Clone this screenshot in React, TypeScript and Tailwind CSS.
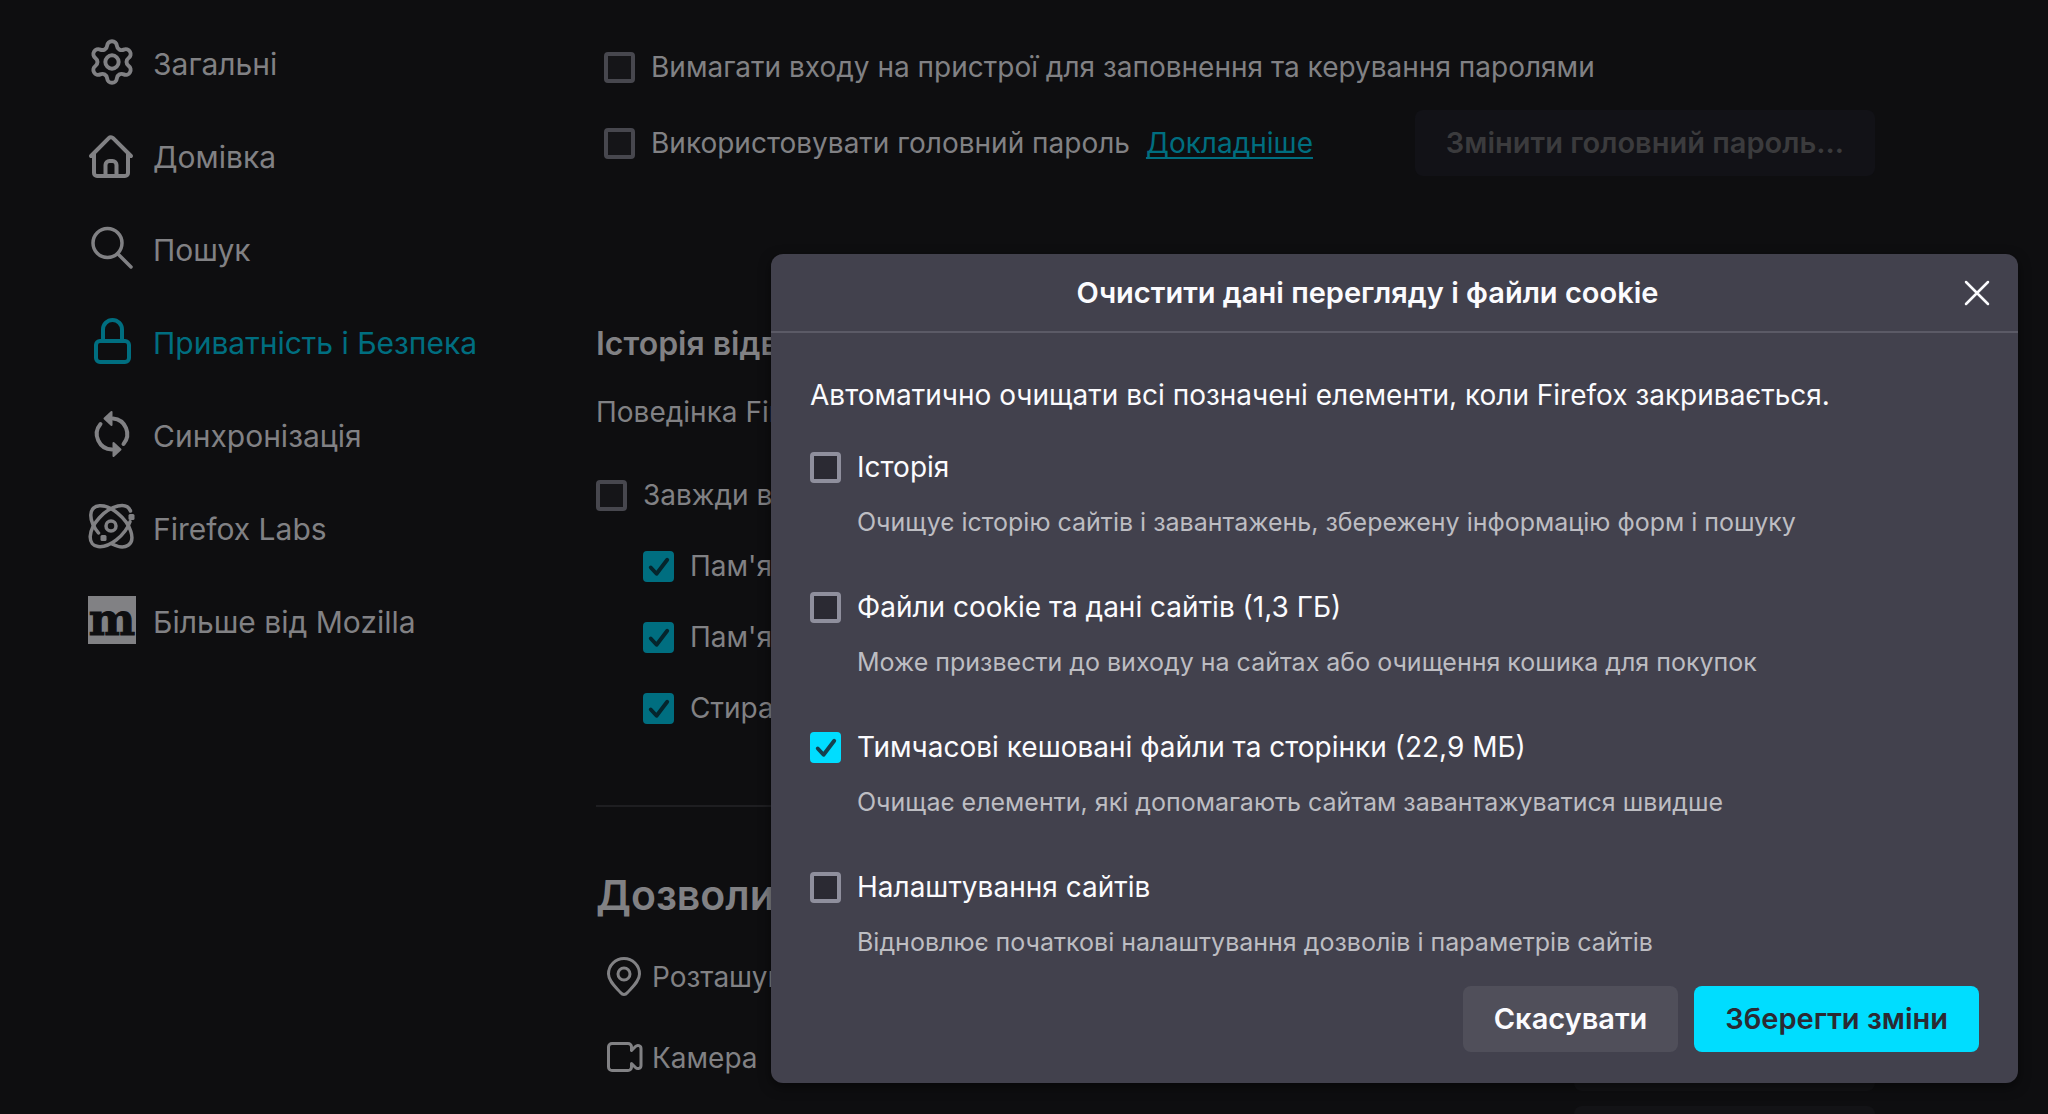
import type { ReactNode } from "react"

const line = { fill: "none", stroke: "currentColor", strokeLinecap: "round", strokeLinejoin: "round" } as const

const icons = {
  gear: (
    <svg viewBox="0 0 24 24" className="size-12" {...line} strokeWidth={1.9}>
      <g transform="translate(12 12) scale(1.04) translate(-12 -12)">
        <path d="M9.671 4.136a2.34 2.34 0 0 1 4.659 0 2.34 2.34 0 0 0 3.319 1.915 2.34 2.34 0 0 1 2.33 4.033 2.34 2.34 0 0 0 0 3.831 2.34 2.34 0 0 1-2.33 4.033 2.34 2.34 0 0 0-3.319 1.915 2.34 2.34 0 0 1-4.659 0 2.34 2.34 0 0 0-3.32-1.915 2.34 2.34 0 0 1-2.33-4.033 2.34 2.34 0 0 0 0-3.831A2.34 2.34 0 0 1 6.35 6.051a2.34 2.34 0 0 0 3.319-1.915" />
        <circle cx="12" cy="12" r="3.2" />
      </g>
    </svg>
  ),
  home: (
    <svg viewBox="0 0 48 48" className="size-12" {...line} strokeWidth={4}>
      <path d="M3 25 20.8 7.2a3 3 0 0 1 4.3 0L43 25" />
      <path d="M6 23v19a3 3 0 0 0 3 3h28a3 3 0 0 0 3-3V23" />
      <path d="M17.5 45V34a4 4 0 0 1 4-4h3a4 4 0 0 1 4 4v11" />
    </svg>
  ),
  search: (
    <svg viewBox="0 0 48 48" className="size-12" {...line} strokeWidth={3.5}>
      <circle cx="19.5" cy="19" r="14.5" />
      <path d="m30 30 13 13" />
    </svg>
  ),
  lock: (
    <svg viewBox="0 0 48 48" className="size-12" {...line} strokeWidth={4}>
      <rect x="8" y="24" width="33" height="21" rx="4" />
      <path d="M15 24V12.5a9.500 9.500 0 0 1 19 0V24" />
    </svg>
  ),
  sync: (
    <svg viewBox="0 0 48 48" className="size-12" {...line} strokeWidth={4}>
      <path d="M12.500 14a15.500 15.500 0 0 0 11.500 25.500" />
      <path d="M25 8.500A15.500 15.500 0 0 1 35.500 34" />
      <path d="M23.500 2v13l-7-6.500z" fill="currentColor" strokeWidth={2} />
      <path d="M25.500 46V33l7 6.500z" fill="currentColor" strokeWidth={2} />
    </svg>
  ),
  labs: (
    <svg viewBox="0 0 48 48" className="size-12" {...line} strokeWidth={3.5}>
      <path d="M42.5 8A25.400 14 -45 1 0 42 18.700" />
      <path d="M10.500 30A25.400 14 45 1 1 24 41" />
      <circle cx="23" cy="23" r="5" />
      <rect x="40.500" y="11" width="6" height="6" rx="1.500" fill="currentColor" stroke="none" />
      <rect x="12.500" y="32" width="6" height="6" rx="1.500" fill="currentColor" stroke="none" />
    </svg>
  ),
  mozilla: (
    <span className="flex size-12 items-center justify-center bg-[#818184] font-['DejaVu_Serif',serif] text-[44px] leading-none font-bold text-[#0e0e10] [-webkit-text-stroke:1px]">
      m
    </span>
  ),
}

const nav = [
  { icon: icons.gear, name: "Загальні" },
  { icon: icons.home, name: "Домівка" },
  { icon: icons.search, name: "Пошук" },
  { icon: icons.lock, name: "Приватність і Безпека", active: true },
  { icon: icons.sync, name: "Синхронізація" },
  { icon: icons.labs, name: "Firefox Labs" },
  { icon: icons.mozilla, name: "Більше від Mozilla" },
]

const options = [
  { name: "Історія", hint: "Очищує історію сайтів і завантажень, збережену інформацію форм і пошуку" },
  { name: "Файли cookie та дані сайтів (1,3 ГБ)", hint: "Може призвести до виходу на сайтах або очищення кошика для покупок" },
  { name: "Тимчасові кешовані файли та сторінки (22,9 МБ)", hint: "Очищає елементи, які допомагають сайтам завантажуватися швидше", checked: true },
  { name: "Налаштування сайтів", hint: "Відновлює початкові налаштування дозволів і параметрів сайтів" },
]

const permissions = [
  {
    name: "Розташування",
    icon: (
      <svg viewBox="0 0 36 40" className="h-10 w-9" {...line} strokeWidth={3}>
        <path d="M18 37.500c-1.500 0-2.500-.8-3.500-2C9 29.500 2.500 24 2.500 17a15.500 15.500 0 0 1 31 0c0 7-6.500 12.500-12 18.500-1 1.200-2 2-3.500 2z" />
        <circle cx="18" cy="17" r="6" />
      </svg>
    ),
  },
  {
    name: "Камера",
    icon: (
      <svg viewBox="0 0 38 40" className="h-10 w-[38px]" {...line} strokeWidth={3}>
        <path d="M25.500 10.500V9a3.500 3.500 0 0 0-3.500-3.500H6A3.500 3.500 0 0 0 2.500 9v20A3.500 3.500 0 0 0 6 32.500h16a3.500 3.500 0 0 0 3.500-3.500v-3.500l4 4c2 2 5.500 1 5.500-2v-17c0-3-3.500-4-5.500-2l-4 4z" />
      </svg>
    ),
  },
]

function Check({ children, checked = false, bright = false }: { children: ReactNode; checked?: boolean; bright?: boolean }) {
  const off = bright ? "border-[#8f8f9d] bg-[#2b2a33]" : "border-[#47474e] bg-[#151518]"
  const on = bright ? "checked:border-[#00ddff] checked:bg-[#00ddff]" : "checked:border-[#006e80] checked:bg-[#006e80]"
  return (
    <label className="flex h-9 items-center gap-4">
      <span className="grid shrink-0">
        <input
          type="checkbox"
          defaultChecked={checked}
          className={`peer col-start-1 row-start-1 size-[31px] appearance-none rounded-sm border-4 ${off} ${on}`}
        />
        <svg
          viewBox="0 0 32 32"
          className={`pointer-events-none invisible col-start-1 row-start-1 size-[31px] peer-checked:visible ${bright ? "text-[#15414f]" : "text-[#05252c]"}`}
          {...line}
          strokeWidth={4}
        >
          <path d="m8 17 6 6.500L25 9" />
        </svg>
      </span>
      <span>{children}</span>
    </label>
  )
}

function ClearDataDialog() {
  return (
    <div className="absolute inset-0 flex items-start pt-[254px] pr-[30px] pl-[771px]">
      <div role="dialog" aria-labelledby="dialog-title" className="min-w-0 flex-1 rounded-xl bg-[#42414d] text-[#fbfbfe] shadow-[0_4px_12px_rgba(0,0,0,0.5)]">
        <header className="flex h-[79px] items-center border-b-2 border-[#5b5a66] pr-7">
          <h2 id="dialog-title" className="flex-1 text-center text-[29px] font-semibold">
            Очистити дані перегляду і файли cookie
          </h2>
          <button type="button" aria-label="Закрити">
            <svg viewBox="0 0 26 26" className="size-[26px]" {...line} strokeWidth={2.5}>
              <path d="m2 2 22 22M24 2 2 24" />
            </svg>
          </button>
        </header>
        <div className="px-[39px] pt-[44px] pb-[31px]">
          <p>Автоматично очищати всі позначені елементи, коли Firefox закривається.</p>
          <div className="mt-9 flex flex-col gap-[51px]">
            {options.map(({ name, hint, checked }) => (
              <div key={name}>
                <Check bright checked={checked}>{name}</Check>
                <p className="mt-[21px] pl-[47px] text-[25px] leading-8 text-[#bdbdc2]">{hint}</p>
              </div>
            ))}
          </div>
          <div className="mt-7 flex justify-end gap-4 text-[29px] font-semibold">
            <button type="button" className="h-[66px] rounded-lg bg-[#504f5a] px-[31px]">Скасувати</button>
            <button type="button" className="h-[66px] rounded-lg bg-[#00ddff] px-[31px] text-[#2b2a33]">Зберегти зміни</button>
          </div>
        </div>
      </div>
    </div>
  )
}

export default function App() {
  return (
    <div className="relative flex h-screen overflow-hidden bg-[#0e0e10] font-[Inter,'Noto_Sans',sans-serif] text-[28px] leading-9 text-[#818184]">
      <nav className="flex w-[596px] shrink-0 flex-col gap-[41px] pt-[38px] pl-[88px]">
        {nav.map(({ icon, name, active }) => (
          <a key={name} href="#" className={`flex h-[52px] items-start gap-[17px] text-[30px] leading-[52px] ${active ? "text-[#006e80]" : ""}`}>
            {icon}
            {name}
          </a>
        ))}
      </nav>
      <main className="max-w-[1279px] min-w-0 flex-1 pt-[49px]">
        <div className="pl-2">
          <Check>Вимагати входу на пристрої для заповнення та керування паролями</Check>
        </div>
        <div className="mt-[25px] flex h-[66px] items-center pl-2">
          <Check>Використовувати головний пароль</Check>
          <a href="#" className="ml-4 text-[#006e80] underline decoration-2 underline-offset-4">Докладніше</a>
          <button type="button" disabled className="ml-auto h-[66px] rounded-lg bg-[#121217] px-[31px] text-[29px] font-semibold text-[#3b3b3d]">
            Змінити головний пароль…
          </button>
        </div>
        <h2 className="mt-[148px] text-[32px] leading-10 font-semibold">Історія відвідувань</h2>
        <p className="mt-[30px]">Поведінка Firefox</p>
        <div className="mt-[47px] flex flex-col gap-[35px]">
          <Check>Завжди вмикати</Check>
          <div className="flex flex-col gap-[35px] pl-[47px]">
            <Check checked>Пам'ятати</Check>
            <Check checked>Пам'ятати</Check>
            <Check checked>Стирати</Check>
          </div>
        </div>
        <hr className="mt-[79px] border-t-2 border-[#1e1e21]" />
        <h1 className="mt-[64px] text-[41px] leading-[48px] font-semibold">Дозволи</h1>
        <ul className="mt-[25px] flex flex-col gap-[15px]">
          {permissions.map(({ name, icon }) => (
            <li key={name} className="flex h-[66px] items-center pl-[10px]">
              <span className="w-[46px]">{icon}</span>
              {name}
              <button type="button" aria-label={`Налаштування: ${name}`} className="ml-auto h-[66px] w-[301px] rounded-lg bg-[#131316]" />
            </li>
          ))}
          <li className="flex h-[66px] justify-end">
            <button type="button" aria-label="Налаштування" className="w-[301px] rounded-lg bg-[#131316]" />
          </li>
        </ul>
      </main>
      <ClearDataDialog />
    </div>
  )
}
